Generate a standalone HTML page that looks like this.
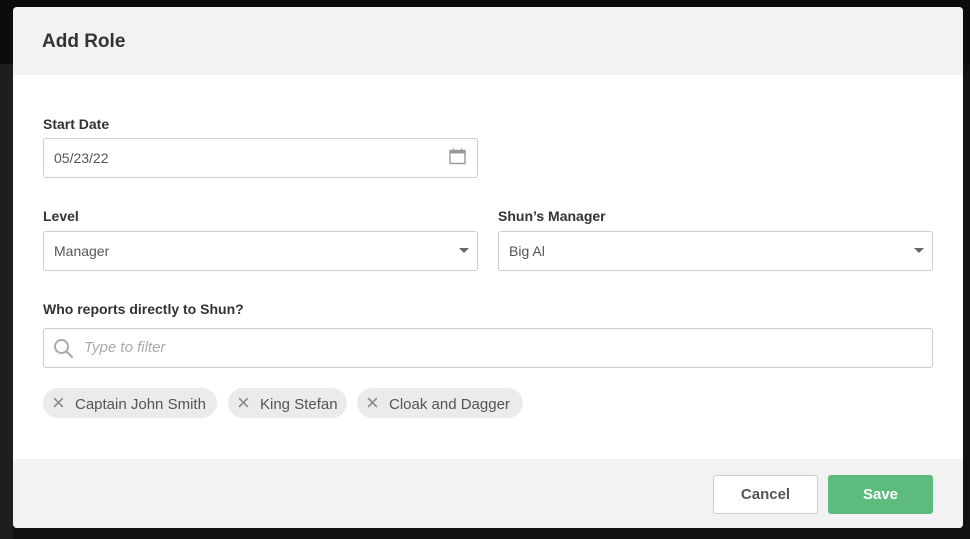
<!DOCTYPE html>
<html><head><style>
*{box-sizing:border-box;margin:0;padding:0}
body{width:970px;height:539px;background:#111214;font-family:"Liberation Sans",sans-serif;position:relative;overflow:hidden}
.bgstrip{position:absolute;left:0;top:0;width:970px;height:64px;background:#0b0c0e}
.side{position:absolute;left:0;top:64px;width:13px;height:475px;background:#1d1e20}
.modal{position:absolute;left:13px;top:7px;width:950px;height:521px;background:#fff;border-radius:4px;overflow:hidden}
.hd{height:68px;background:#f2f2f2;padding-left:29px;line-height:68px;font-size:19px;color:#333;font-weight:bold}
.ft{position:absolute;left:0;top:452px;width:950px;height:69px;background:#f2f2f2}
.lbl{position:absolute;font-size:14px;font-weight:bold;color:#333}
.in{position:absolute;height:40px;border:1px solid #ccc;border-radius:3px;background:#fff;font-size:14px;color:#555;padding-left:10px;line-height:38px}
.caret{position:absolute;right:8px;top:16px;width:0;height:0;border-left:5px solid transparent;border-right:5px solid transparent;border-top:5px solid #666}
.chip{position:absolute;top:381px;height:30px;border-radius:15px;background:#ebebeb;font-size:15px;color:#555;line-height:33px;padding-left:32px}
.chip:before{content:"\00d7";position:absolute;left:9px;top:0;font-size:22px;color:#888;line-height:30px}
.btn{position:absolute;top:468px;height:39px;border-radius:3px;font-size:15px;font-weight:bold;text-align:center;line-height:39px}
</style></head><body>
<div class="bgstrip"></div><div class="side"></div>
<div class="modal">
<div class="hd" style="line-height:70px">Add Role</div>
<div class="lbl" style="left:30px;top:109px">Start Date</div>
<div class="in" style="left:30px;top:131px;width:435px">05/23/22
<svg style="position:absolute;right:11px;top:9px" width="17" height="17" viewBox="0 0 17 17"><rect x="1" y="2.5" width="15" height="13" fill="none" stroke="#999" stroke-width="1.4"/><rect x="1" y="2.5" width="15" height="3" fill="#999"/><line x1="4.5" y1="0.5" x2="4.5" y2="3" stroke="#999" stroke-width="1.4"/><line x1="12.5" y1="0.5" x2="12.5" y2="3" stroke="#999" stroke-width="1.4"/></svg></div>
<div class="lbl" style="left:30px;top:201px">Level</div>
<div class="in" style="left:30px;top:224px;width:435px">Manager<div class="caret"></div></div>
<div class="lbl" style="left:485px;top:201px">Shun’s Manager</div>
<div class="in" style="left:485px;top:224px;width:435px">Big Al<div class="caret"></div></div>
<div class="lbl" style="left:30px;top:294px">Who reports directly to Shun?</div>
<div class="in" style="left:30px;top:321px;width:890px;padding-left:40px;font-style:italic;color:#aaa;font-size:15px">Type to filter
<svg style="position:absolute;left:9px;top:9px" width="22" height="22" viewBox="0 0 22 22"><circle cx="8.5" cy="8.5" r="6.5" fill="none" stroke="#aaa" stroke-width="2"/><line x1="13.5" y1="13.5" x2="19" y2="19" stroke="#aaa" stroke-width="2.2" stroke-linecap="round"/></svg></div>
<div class="chip" style="left:30px;width:174px">Captain John Smith</div>
<div class="chip" style="left:215px;width:119px">King Stefan</div>
<div class="chip" style="left:344px;width:166px">Cloak and Dagger</div>
<div class="ft"></div>
<div class="btn" style="left:700px;width:105px;background:#fff;border:1px solid #ccc;color:#555;line-height:37px">Cancel</div>
<div class="btn" style="left:815px;width:105px;background:#5dbb7e;color:#fff">Save</div>
</div>
</body></html>
